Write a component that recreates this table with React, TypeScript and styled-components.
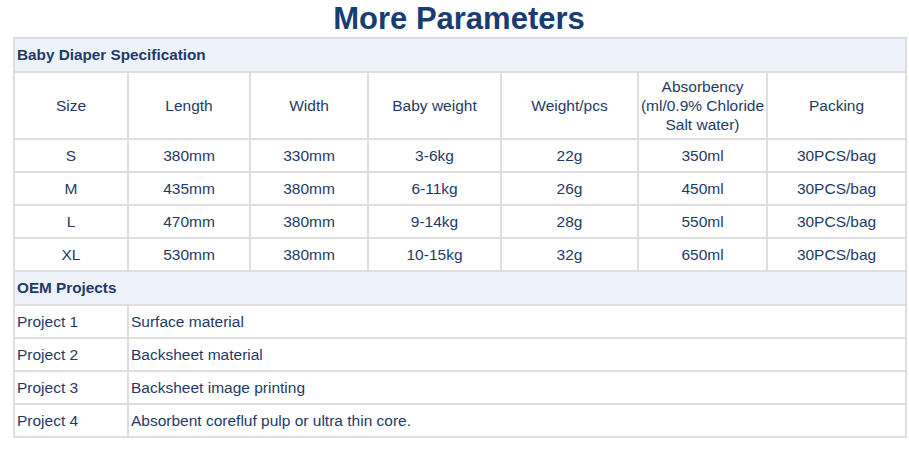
import React from "react";
import styled, { createGlobalStyle } from "styled-components";

const GlobalStyle = createGlobalStyle`
  html, body {
    margin: 0;
    padding: 0;
    background: #ffffff;
  }
  body {
    font-family: "Liberation Sans", Arial, sans-serif;
  }
`;

const Page = styled.div`
  width: 909px;
  padding: 0 4px 0 13px;
  box-sizing: border-box;
`;

const Title = styled.h1`
  margin: 0;
  height: 37px;
  line-height: 38px;
  text-align: center;
  font-size: 31px;
  font-weight: bold;
  color: #173d72;
`;

const Table = styled.table`
  width: 892px;
  border-collapse: collapse;
  table-layout: fixed;
  color: #1f3a68;
  font-size: 15.5px;
`;

const Cell = styled.td<{ $align?: "left" | "center" }>`
  border: 2px solid #dedede;
  padding: 0 2px;
  height: 31px;
  text-align: ${(p) => p.$align || "center"};
  vertical-align: middle;
  white-space: nowrap;
  overflow: hidden;
`;

const SectionCell = styled.td`
  border: 2px solid #dedede;
  background: #eef3fb;
  height: 32px;
  padding: 0 2px;
  font-size: 15.3px;
  font-weight: bold;
  text-align: left;
`;

const HeadCell = styled.td`
  border: 2px solid #dedede;
  height: 65px;
  padding: 0 1px;
  text-align: center;
  line-height: 19px;
  white-space: nowrap;
`;

const columns = [114, 122, 118, 133, 137, 129, 139];

const specs = [
  ["S", "380mm", "330mm", "3-6kg", "22g", "350ml", "30PCS/bag"],
  ["M", "435mm", "380mm", "6-11kg", "26g", "450ml", "30PCS/bag"],
  ["L", "470mm", "380mm", "9-14kg", "28g", "550ml", "30PCS/bag"],
  ["XL", "530mm", "380mm", "10-15kg", "32g", "650ml", "30PCS/bag"],
];

const projects = [
  ["Project 1", "Surface material"],
  ["Project 2", "Backsheet material"],
  ["Project 3", "Backsheet image printing"],
  ["Project 4", "Absorbent corefluf pulp or ultra thin core."],
];

export default function App() {
  return (
    <Page>
      <GlobalStyle />
      <Title>More Parameters</Title>
      <Table>
        <colgroup>
          {columns.map((w, i) => (
            <col key={i} style={{ width: w }} />
          ))}
        </colgroup>
        <tbody>
          <tr>
            <SectionCell colSpan={7}>Baby Diaper Specification</SectionCell>
          </tr>
          <tr>
            <HeadCell>Size</HeadCell>
            <HeadCell>Length</HeadCell>
            <HeadCell>Width</HeadCell>
            <HeadCell>Baby weight</HeadCell>
            <HeadCell>Weight/pcs</HeadCell>
            <HeadCell>
              Absorbency
              <br />
              (ml/0.9% Chloride
              <br />
              Salt water)
            </HeadCell>
            <HeadCell>Packing</HeadCell>
          </tr>
          {specs.map((row) => (
            <tr key={row[0]}>
              {row.map((v, i) => (
                <Cell key={i}>{v}</Cell>
              ))}
            </tr>
          ))}
          <tr>
            <SectionCell colSpan={7}>OEM Projects</SectionCell>
          </tr>
          {projects.map(([name, desc]) => (
            <tr key={name}>
              <Cell $align="left">{name}</Cell>
              <Cell $align="left" colSpan={6}>
                {desc}
              </Cell>
            </tr>
          ))}
        </tbody>
      </Table>
    </Page>
  );
}
